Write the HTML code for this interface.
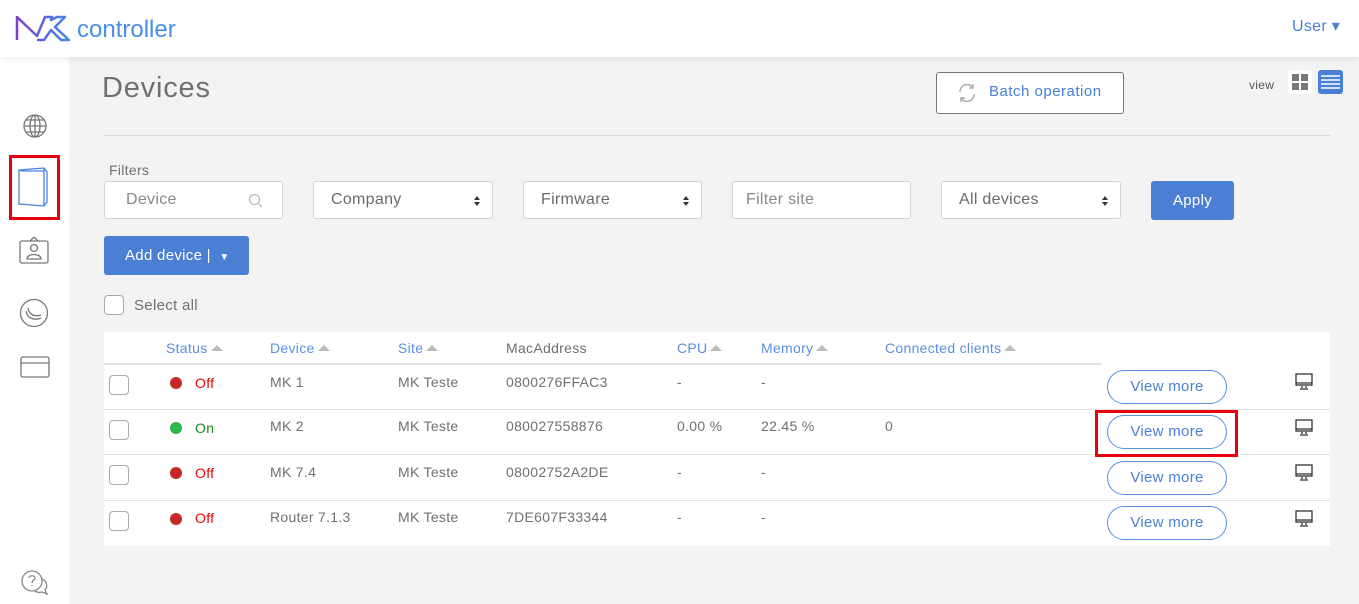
<!DOCTYPE html>
<html><head><meta charset="utf-8"><style>
*{box-sizing:border-box;margin:0;padding:0}
body{width:1359px;height:604px;overflow:hidden;background:#f3f3f3;font-family:"Liberation Sans",sans-serif;position:relative;color:#707070;letter-spacing:0.3px}
.a{position:absolute}
.hdr{left:0;top:0;width:1359px;height:57px;background:#fff;box-shadow:0 2px 6px rgba(0,0,0,.08);z-index:2}
.side{left:0;top:57px;width:69px;height:547px;background:#fff}
.inp{background:#fff;border:1px solid #d4d4d4;border-radius:3px;height:38px;font-size:16px;color:#6b6b6b;padding:9px 0 0 17px}
.sel:after{content:"";position:absolute;right:12px;top:14px;border:3.5px solid transparent;border-bottom:4px solid #333;border-top:none}
.sel:before{content:"";position:absolute;right:12px;top:20px;border:3.5px solid transparent;border-top:4px solid #333;border-bottom:none}
.th{font-size:14px;color:#5b8ee0;top:340px}
.tri{display:inline-block;border:6px solid transparent;border-bottom:6px solid #bbb;border-top:none;margin-left:3px;vertical-align:2px}
.td{font-size:14px;color:#707070}
.cb{width:20px;height:20px;border:1px solid #aaa;border-radius:4px;background:#fff}
.vm{width:120px;height:34px;border:1px solid #5b8ee0;border-radius:17px;color:#4a7fd4;font-size:15px;text-align:center;line-height:32px;background:#fff}
.dot{width:12px;height:12px;border-radius:50%}
</style></head><body>
<div class="a hdr">
 <svg class="a" style="left:15px;top:14px" width="64" height="28" viewBox="0 0 64 28"><defs><linearGradient id="g" x1="0" x2="1"><stop offset="0" stop-color="#7b3fd0"/><stop offset="1" stop-color="#3e8ae6"/></linearGradient></defs><path d="M2 26V3L22 22L30 3H37L36 6L42 3H50L40 13L54 26H46L36 16L29 26H22" fill="none" stroke="url(#g)" stroke-width="2.5" stroke-linejoin="round"/></svg>
 <div class="a" style="left:77px;top:16px;font-size:24px;color:#4a8ee6;letter-spacing:0px">controller</div>
 <div class="a" style="left:1292px;top:16px;font-size:16px;color:#4a7fd4">User ▾</div>
</div>
<div class="a side"></div>
<svg class="a" style="left:22px;top:113px" width="26" height="26" viewBox="0 0 26 26" fill="none" stroke="#777" stroke-width="1.3"><circle cx="13" cy="13" r="11"/><ellipse cx="13" cy="13" rx="5" ry="11"/><path d="M2 13H24M4 7H22M4 19H22M13 2V24"/></svg>
<div class="a" style="left:9px;top:155px;width:51px;height:65px;border:3px solid #e8000f"></div>
<svg class="a" style="left:16px;top:166px" width="36" height="42" viewBox="0 0 36 42" fill="none" stroke="#4a80e0" stroke-width="1.3"><path d="M3 4L28 2L31 6V36L28 40L3 38Z"/><path d="M28 2V40M3 4L6 5H28"/></svg>
<svg class="a" style="left:19px;top:236px" width="30" height="28" viewBox="0 0 30 28" fill="none" stroke="#777" stroke-width="1.3"><rect x="1" y="5" width="28" height="22" rx="2"/><path d="M11 5L15 1L19 5"/><circle cx="15" cy="12" r="3.5"/><path d="M8 23C8 17 22 17 22 23Z"/></svg>
<svg class="a" style="left:19px;top:298px" width="30" height="30" viewBox="0 0 30 30" fill="none" stroke="#777" stroke-width="1.3"><circle cx="15" cy="15" r="13.5"/><path d="M7 13C8 20 15 23 22 20M9 10C10 17 16 19 22 17"/></svg>
<svg class="a" style="left:20px;top:356px" width="30" height="22" viewBox="0 0 30 22" fill="none" stroke="#777" stroke-width="1.3"><rect x="1" y="1" width="28" height="20" rx="2"/><path d="M1 7H29"/></svg>
<svg class="a" style="left:20px;top:569px" width="30" height="26" viewBox="0 0 30 26" fill="none" stroke="#888" stroke-width="1.3"><circle cx="12" cy="12" r="10"/><path d="M9 9C9 6 15 6 15 9C15 11 12 11 12 14M12 16V17"/><path d="M22 10C27 12 28 18 25 21L27 25L22 23C19 24 16 23 15 22"/></svg>

<div class="a" style="left:102px;top:72px;font-size:29px;color:#707070;letter-spacing:0.8px">Devices</div>
<div class="a" style="left:936px;top:72px;width:188px;height:42px;border:1px solid #777;border-radius:3px;background:#fff"></div>
<svg class="a" style="left:957px;top:83px" width="20" height="20" viewBox="0 0 20 20" fill="none" stroke="#aaa" stroke-width="1.4"><path d="M3 9A7 7 0 0 1 16 5M17 11A7 7 0 0 1 4 15M16 1V5H12M4 19V15H8"/></svg>
<div class="a" style="left:989px;top:83px;font-size:15px;color:#4a7fd4;letter-spacing:0.5px">Batch operation</div>
<div class="a" style="left:1249px;top:78px;font-size:12px;color:#555">view</div>
<div class="a" style="left:1288px;top:70px;width:24px;height:24px;background:#fff;border-radius:3px"></div>
<svg class="a" style="left:1292px;top:74px" width="17" height="17"><rect x="0" y="0" width="7" height="7" fill="#777"/><rect x="9" y="0" width="7" height="7" fill="#777"/><rect x="0" y="9" width="7" height="7" fill="#777"/><rect x="9" y="9" width="7" height="7" fill="#777"/></svg>
<div class="a" style="left:1318px;top:70px;width:25px;height:24px;background:#4a7fd4;border-radius:3px"></div>
<svg class="a" style="left:1321px;top:75px" width="19" height="14" stroke="#fff" stroke-width="1.6"><path d="M0 1H19M0 5H19M0 9H19M0 13H19"/></svg>
<div class="a" style="left:104px;top:135px;width:1226px;height:1px;background:#d9d9d9"></div>

<div class="a" style="left:109px;top:162px;font-size:14px;color:#707070">Filters</div>
<div class="a inp" style="left:104px;top:181px;width:179px;padding-left:21px;color:#888">Device</div>
<svg class="a" style="left:248px;top:193px" width="16" height="16" fill="none" stroke="#bbb" stroke-width="1.3"><circle cx="6.5" cy="6.5" r="5"/><path d="M10 10L14 14"/></svg>
<div class="a inp sel" style="left:313px;top:181px;width:180px">Company</div>
<div class="a inp sel" style="left:523px;top:181px;width:179px">Firmware</div>
<div class="a inp" style="left:732px;top:181px;width:179px;padding-left:13px;color:#888">Filter site</div>
<div class="a inp sel" style="left:941px;top:181px;width:180px">All devices</div>
<div class="a" style="left:1151px;top:181px;width:83px;height:39px;background:#4a7fd4;border-radius:3px;color:#fff;font-size:15px;text-align:center;line-height:39px">Apply</div>
<div class="a" style="left:104px;top:236px;width:145px;height:39px;background:#4a7fd4;border-radius:3px;color:#fff;font-size:15px;line-height:39px;padding-left:21px">Add device | <span style="font-size:10px;margin-left:4px">▼</span></div>
<div class="a cb" style="left:104px;top:295px"></div>
<div class="a" style="left:134px;top:297px;font-size:15px;color:#707070">Select all</div>

<div class="a" style="left:104px;top:332px;width:1226px;height:214px;background:#fff"></div>
<div class="a" style="left:104px;top:363px;width:997px;height:2px;background:#dde0e6"></div>
<div class="a" style="left:104px;top:409px;width:1226px;height:1px;background:#e3e3e3"></div>
<div class="a" style="left:104px;top:454px;width:1226px;height:1px;background:#e3e3e3"></div>
<div class="a" style="left:104px;top:500px;width:1226px;height:1px;background:#e3e3e3"></div>
<div class="a th" style="left:166px">Status<span class="tri"></span></div>
<div class="a th" style="left:270px">Device<span class="tri"></span></div>
<div class="a th" style="left:398px">Site<span class="tri"></span></div>
<div class="a th" style="left:506px;color:#707070">MacAddress</div>
<div class="a th" style="left:677px">CPU<span class="tri"></span></div>
<div class="a th" style="left:761px">Memory<span class="tri"></span></div>
<div class="a th" style="left:885px">Connected clients<span class="tri"></span></div>

<div class="a cb" style="left:109px;top:375px"></div>
<div class="a dot" style="left:170px;top:377px;background:#c62828"></div>
<div class="a td" style="left:195px;top:375px;color:#e00">Off</div>
<div class="a td" style="left:270px;top:374px">MK 1</div>
<div class="a td" style="left:398px;top:374px">MK Teste</div>
<div class="a td" style="left:506px;top:374px">0800276FFAC3</div>
<div class="a td" style="left:677px;top:374px">-</div>
<div class="a td" style="left:761px;top:374px">-</div>
<div class="a vm" style="left:1107px;top:370px">View more</div>

<div class="a cb" style="left:109px;top:420px"></div>
<div class="a dot" style="left:170px;top:422px;background:#2eb84b"></div>
<div class="a td" style="left:195px;top:420px;color:#1a8a1a">On</div>
<div class="a td" style="left:270px;top:418px">MK 2</div>
<div class="a td" style="left:398px;top:418px">MK Teste</div>
<div class="a td" style="left:506px;top:418px">080027558876</div>
<div class="a td" style="left:677px;top:418px">0.00 %</div>
<div class="a td" style="left:761px;top:418px">22.45 %</div>
<div class="a td" style="left:885px;top:418px">0</div>
<div class="a" style="left:1095px;top:410px;width:143px;height:47px;border:3px solid #e8000f"></div>
<div class="a vm" style="left:1107px;top:415px">View more</div>

<div class="a cb" style="left:109px;top:465px"></div>
<div class="a dot" style="left:170px;top:467px;background:#c62828"></div>
<div class="a td" style="left:195px;top:465px;color:#e00">Off</div>
<div class="a td" style="left:270px;top:464px">MK 7.4</div>
<div class="a td" style="left:398px;top:464px">MK Teste</div>
<div class="a td" style="left:506px;top:464px">08002752A2DE</div>
<div class="a td" style="left:677px;top:464px">-</div>
<div class="a td" style="left:761px;top:464px">-</div>
<div class="a vm" style="left:1107px;top:461px">View more</div>

<div class="a cb" style="left:109px;top:511px"></div>
<div class="a dot" style="left:170px;top:513px;background:#c62828"></div>
<div class="a td" style="left:195px;top:510px;color:#e00">Off</div>
<div class="a td" style="left:270px;top:509px">Router 7.1.3</div>
<div class="a td" style="left:398px;top:509px">MK Teste</div>
<div class="a td" style="left:506px;top:509px">7DE607F33344</div>
<div class="a td" style="left:677px;top:509px">-</div>
<div class="a td" style="left:761px;top:509px">-</div>
<div class="a vm" style="left:1107px;top:506px">View more</div>

<svg class="a" style="left:1295px;top:373px" width="18" height="18" fill="none" stroke="#333" stroke-width="1.3"><rect x="1" y="1" width="16" height="11"/><path d="M1 10H17M7 13V15M11 13V15M5 16H13"/></svg>
<svg class="a" style="left:1295px;top:419px" width="18" height="18" fill="none" stroke="#333" stroke-width="1.3"><rect x="1" y="1" width="16" height="11"/><path d="M1 10H17M7 13V15M11 13V15M5 16H13"/></svg>
<svg class="a" style="left:1295px;top:464px" width="18" height="18" fill="none" stroke="#333" stroke-width="1.3"><rect x="1" y="1" width="16" height="11"/><path d="M1 10H17M7 13V15M11 13V15M5 16H13"/></svg>
<svg class="a" style="left:1295px;top:510px" width="18" height="18" fill="none" stroke="#333" stroke-width="1.3"><rect x="1" y="1" width="16" height="11"/><path d="M1 10H17M7 13V15M11 13V15M5 16H13"/></svg>
</body></html>
